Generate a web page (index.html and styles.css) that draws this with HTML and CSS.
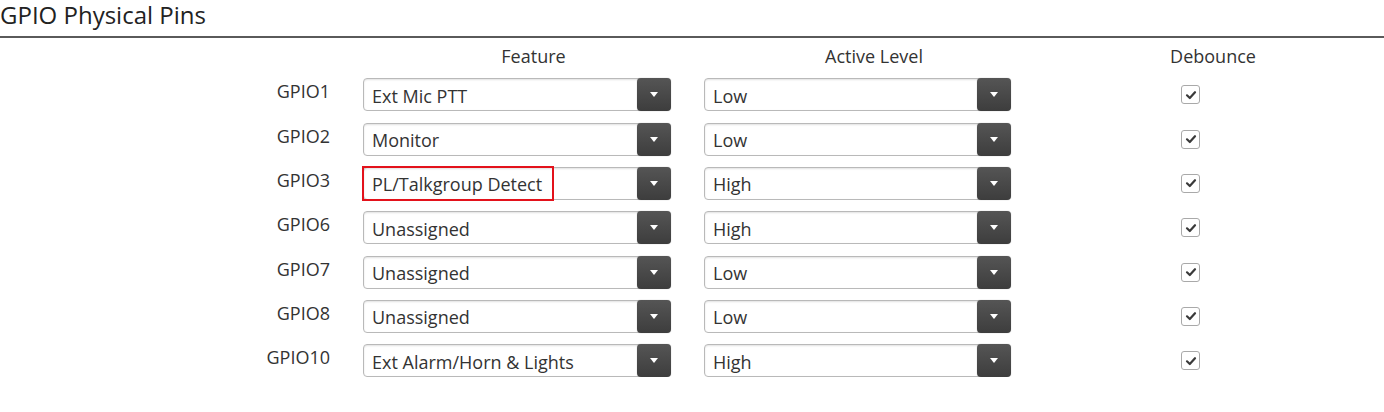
FILE: index.html
```html
<!DOCTYPE html>
<html lang="en">
<head>
  <meta charset="UTF-8" />
  <title>GPIO Physical Pins</title>
  <link rel="stylesheet" href="styles.css">
</head>
<body>

  <h1 class="title">GPIO Physical Pins</h1>

  <div class="pins">
    <div></div>
    <div class="col-head">Feature</div>
    <div class="col-head">Active Level</div>
    <div class="col-head">Debounce</div>

    <!-- GPIO1 -->
    <div class="pin-name">GPIO1</div>
    <div class="combo"><span class="combo-text">Ext Mic PTT</span><span class="combo-btn"></span></div>
    <div class="combo"><span class="combo-text">Low</span><span class="combo-btn"></span></div>
    <div class="check-cell"><span class="check"><svg viewBox="0 0 12 12"><path d="M2 6.3 L4.8 9 L10 3.2"/></svg></span></div>

    <!-- GPIO2 -->
    <div class="pin-name">GPIO2</div>
    <div class="combo"><span class="combo-text">Monitor</span><span class="combo-btn"></span></div>
    <div class="combo"><span class="combo-text">Low</span><span class="combo-btn"></span></div>
    <div class="check-cell"><span class="check"><svg viewBox="0 0 12 12"><path d="M2 6.3 L4.8 9 L10 3.2"/></svg></span></div>

    <!-- GPIO3 -->
    <div class="pin-name">GPIO3</div>
    <div class="combo"><span class="combo-text">PL/Talkgroup Detect</span><span class="combo-btn"></span><span class="highlight"></span></div>
    <div class="combo"><span class="combo-text">High</span><span class="combo-btn"></span></div>
    <div class="check-cell"><span class="check"><svg viewBox="0 0 12 12"><path d="M2 6.3 L4.8 9 L10 3.2"/></svg></span></div>

    <!-- GPIO6 -->
    <div class="pin-name">GPIO6</div>
    <div class="combo"><span class="combo-text">Unassigned</span><span class="combo-btn"></span></div>
    <div class="combo"><span class="combo-text">High</span><span class="combo-btn"></span></div>
    <div class="check-cell"><span class="check"><svg viewBox="0 0 12 12"><path d="M2 6.3 L4.8 9 L10 3.2"/></svg></span></div>

    <!-- GPIO7 -->
    <div class="pin-name">GPIO7</div>
    <div class="combo"><span class="combo-text">Unassigned</span><span class="combo-btn"></span></div>
    <div class="combo"><span class="combo-text">Low</span><span class="combo-btn"></span></div>
    <div class="check-cell"><span class="check"><svg viewBox="0 0 12 12"><path d="M2 6.3 L4.8 9 L10 3.2"/></svg></span></div>

    <!-- GPIO8 -->
    <div class="pin-name">GPIO8</div>
    <div class="combo"><span class="combo-text">Unassigned</span><span class="combo-btn"></span></div>
    <div class="combo"><span class="combo-text">Low</span><span class="combo-btn"></span></div>
    <div class="check-cell"><span class="check"><svg viewBox="0 0 12 12"><path d="M2 6.3 L4.8 9 L10 3.2"/></svg></span></div>

    <!-- GPIO10 -->
    <div class="pin-name">GPIO10</div>
    <div class="combo"><span class="combo-text">Ext Alarm/Horn &amp; Lights</span><span class="combo-btn"></span></div>
    <div class="combo"><span class="combo-text">High</span><span class="combo-btn"></span></div>
    <div class="check-cell"><span class="check"><svg viewBox="0 0 12 12"><path d="M2 6.3 L4.8 9 L10 3.2"/></svg></span></div>
  </div>

</body>
</html>
```

FILE: styles.css
```css
* {
  margin: 0;
  padding: 0;
  box-sizing: border-box;
}

body {
  font-family: 'Open Sans', 'Noto Sans', sans-serif;
  font-size: 18px;
  color: #333;
  background: #fff;
  overflow: hidden;
}

.title {
  height: 38px;
  padding-top: 0;
  font-size: 24px;
  font-weight: normal;
  line-height: 30px;
  color: #222;
  border-bottom: 2px solid #5a5a5a;
}

.pins {
  display: grid;
  grid-template-columns: 330px 308px 307px 305px;
  grid-template-rows: 22px;
  grid-auto-rows: 33px;
  column-gap: 33px;
  row-gap: 11.33px;
  padding-top: 7px;
}

.col-head {
  padding-left: 33px;
  text-align: center;
  line-height: 22px;
  color: #333;
}

.pin-name {
  text-align: right;
  line-height: 26px;
  color: #333;
}

.combo {
  position: relative;
  display: flex;
  align-items: center;
  border: 1px solid #b9b9b9;
  border-radius: 4px;
  box-shadow: inset 0 1px 2px rgba(0, 0, 0, 0.12);
  background: #fff;
}

.combo-text {
  flex: 1;
  padding-left: 8px;
  padding-top: 2px;
  color: #333;
  white-space: nowrap;
}

.combo-btn {
  position: relative;
  width: 34px;
  height: 33px;
  margin: -1px -1px -1px 0;
  border-radius: 4px;
  background: linear-gradient(#555, #3d3d3d);
  box-shadow: 0 0 1px rgba(0, 0, 0, 0.4);
}

.combo-btn::after {
  content: "";
  position: absolute;
  left: 13px;
  top: 14px;
  border-left: 4.5px solid transparent;
  border-right: 4.5px solid transparent;
  border-top: 5px solid #fff;
}

.highlight {
  position: absolute;
  left: -2px;
  top: -2px;
  width: 192px;
  height: 35px;
  border: 2px solid #e3121b;
}

.check-cell {
  display: flex;
  align-items: center;
  padding-left: 137px;
}

.check {
  width: 19px;
  height: 19px;
  border: 1.5px solid #a9a9a9;
  border-radius: 3px;
  background: #fff;
  display: flex;
  align-items: center;
  justify-content: center;
}

.check svg {
  width: 12px;
  height: 12px;
  fill: none;
  stroke: #3a3a3a;
  stroke-width: 2.2;
  stroke-linecap: round;
  stroke-linejoin: round;
}
```
